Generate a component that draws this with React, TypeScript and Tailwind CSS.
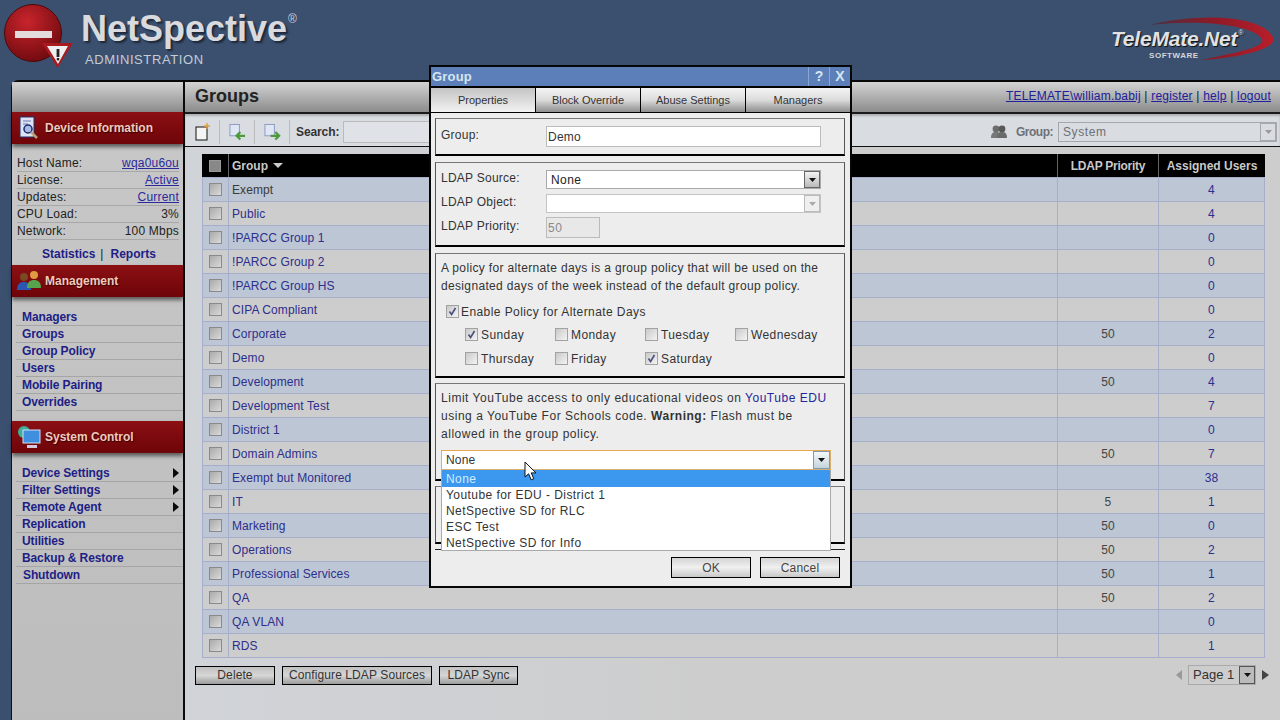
import React from "react";

const rows: [string, string, string][] = [
  ["Exempt", "", "4"], ["Public", "", "4"], ["!PARCC Group 1", "", "0"], ["!PARCC Group 2", "", "0"], ["!PARCC Group HS", "", "0"],
  ["CIPA Compliant", "", "0"], ["Corporate", "50", "2"], ["Demo", "", "0"], ["Development", "50", "4"], ["Development Test", "", "7"],
  ["District 1", "", "0"], ["Domain Admins", "50", "7"], ["Exempt but Monitored", "", "38"], ["IT", "5", "1"], ["Marketing", "50", "0"],
  ["Operations", "50", "2"], ["Professional Services", "50", "1"], ["QA", "50", "2"], ["QA VLAN", "", "0"], ["RDS", "", "1"],
];

function Caret({ color = "#111", w = 7, h = 4 }: { color?: string; w?: number; h?: number }) {
  return <svg width={w} height={h} viewBox="0 0 7 4" preserveAspectRatio="none"><path d="M0 0h7L3.5 4z" fill={color} /></svg>;
}

function Check({ on = false }: { on?: boolean }) {
  return (
    <span className="mb-[1px] flex h-[13px] w-[13px] shrink-0 items-center justify-center border border-[#a2a2a2] bg-gradient-to-br from-[#c9c9c9] to-[#f4f4f4]">
      {on && <svg width="9" height="9" viewBox="0 0 9 9"><path d="M1.5 4.5 3.6 7.5 7.5 1" fill="none" stroke="#4a4f7e" strokeWidth="1.6" /></svg>}
    </span>
  );
}

function Day({ label, on = false }: { label: string; on?: boolean }) {
  return <div className="flex items-center gap-[3px]"><Check on={on} /><span>{label}</span></div>;
}

function SideRow({ label, arrow = false, extra = "" }: { label: string; arrow?: boolean; extra?: string }) {
  return (
    <div className="flex h-[17px] items-center justify-between border-b border-[#a5a5a5] pr-[4px] pl-[6px]">
      <span className={`text-[12px] font-bold tracking-[-0.12px] text-[#1e1e86] ${extra}`}>{label}</span>
      {arrow && <svg width="6" height="10" viewBox="0 0 6 10"><path d="M0 0l6 5-6 5z" fill="#0a0a0a" /></svg>}
    </div>
  );
}

function InfoRow({ label, value, link = false }: { label: string; value: string; link?: boolean }) {
  return (
    <div className="flex h-[17px] items-center justify-between border-b border-[#a8a8a8] text-[12px] tracking-[0.2px] text-[#222]">
      <span>{label}</span>
      <span className={link ? "text-[#2a2a9c] underline" : ""}>{value}</span>
    </div>
  );
}

function RedHeader({ label, icon, className = "" }: { label: string; icon: React.ReactNode; className?: string }) {
  return (
    <div className={`flex h-[32px] items-center bg-gradient-to-b from-[#8b1014] to-[#6e0508] shadow-[0_3px_4px_rgba(0,0,0,0.55)] ${className}`}>
      <span className="flex w-[33px] shrink-0 justify-center">{icon}</span>
      <span className="text-[12px] font-bold text-[#efc9bd] [text-shadow:1px_1px_1px_#300]">{label}</span>
    </div>
  );
}

function Section({ className = "", children }: { className?: string; children?: React.ReactNode }) {
  return <div className={`ml-[4px] w-[410px] border border-t-[#777] border-r-[#555] border-b-2 border-b-black border-l-[#555] px-[5px] ${className}`}>{children}</div>;
}

function GrayButton({ label, className = "" }: { label: string; className?: string }) {
  return <button className={`flex items-center justify-center border border-black bg-gradient-to-b from-[#c0c0c0] via-[#d6d6d6] to-[#9c9c9c] text-[12px] tracking-[0.1px] text-[#333] ${className}`}>{label}</button>;
}

function DialogButton({ label }: { label: string }) {
  return <button className="flex h-[21px] w-[80px] items-center justify-center border border-black bg-gradient-to-b from-[#d4d4d4] via-[#f0f0f0] to-[#c8c8c8] text-[12px] tracking-[0.2px] text-[#444]">{label}</button>;
}

function Tab({ label, active = false }: { label: string; active?: boolean }) {
  return (
    <div className={`flex flex-1 items-center justify-center pt-[1px] text-[11px] text-[#333] ${active ? "bg-gradient-to-b from-[#c4c4c4] to-[#f2f2f2]" : "bg-gradient-to-b from-[#f4f4f4] via-[#dcdcdc] to-[#8e8e8e]"}`}>{label}</div>
  );
}

function MiniSelect({ text, disabled = false }: { text: string; disabled?: boolean }) {
  return (
    <div className={`flex h-[19px] w-[275px] items-center justify-between border bg-white pl-[4px] text-[12px] tracking-[0.4px] text-[#222] ${disabled ? "border-[#c4c4c4]" : "border-[#aaa]"}`}>
      <span>{text}</span>
      <span className={`flex h-[17px] w-[16px] items-center justify-center border ${disabled ? "border-[#bbb] bg-[#efefef]" : "border-[#666] bg-gradient-to-b from-[#f2f2f2] to-[#bbb]"}`}><Caret color={disabled ? "#aaa" : "#111"} /></span>
    </div>
  );
}

function Modal() {
  return (
    <div className="absolute top-[65px] left-[429px] z-10 flex h-[523px] w-[423px] flex-col border-2 border-[#060606] bg-[#ededed] text-[12px] text-[#333] [font-family:'Liberation_Sans',Arial,sans-serif]">
      <div className="flex h-[19px] items-center justify-between bg-[#5c7fb9] pl-[1px]">
        <span className="text-[13px] font-bold tracking-[0.2px] text-[#d5e6ee]">Group</span>
        <div className="flex h-full text-[14px] font-bold text-[#d5e6ee]">
          <span className="flex w-[21px] items-center justify-center border-l border-[#8aa6d2]">?</span>
          <span className="flex w-[21px] items-center justify-center border-l border-[#8aa6d2]">X</span>
        </div>
      </div>
      <div className="flex h-[27px] gap-[1px] border-t-2 border-b border-black bg-black">
        <Tab label="Properties" active /><Tab label="Block Override" /><Tab label="Abuse Settings" /><Tab label="Managers" />
      </div>
      <Section className="mt-[5px] h-[38px]">
        <div className="flex pt-[7px]">
          <span className="w-[105px] text-[12px] tracking-[0.25px]">Group:</span>
          <div className="flex h-[21px] w-[275px] items-center border border-[#bbb] bg-white pt-[1px] pl-[1px] tracking-[0.25px]">Demo</div>
        </div>
      </Section>
      <Section className="mt-[6px] flex h-[85px] flex-col pt-[7px] tracking-[0.25px]">
        <div className="flex h-[19px] items-center"><span className="mb-[4px] w-[105px]">LDAP Source:</span><MiniSelect text="None" /></div>
        <div className="mt-[5px] flex h-[19px] items-center"><span className="mb-[4px] w-[105px]">LDAP Object:</span><MiniSelect text="" disabled /></div>
        <div className="mt-[4px] flex h-[21px] items-center"><span className="mb-[4px] w-[105px]">LDAP Priority:</span><div className="flex h-[21px] w-[54px] items-center border border-[#bbb] bg-[#e8e8e8] pt-[1px] pl-[1px] tracking-[0.5px] text-[#8a8a8a]">50</div></div>
      </Section>
      <Section className="mt-[6px] h-[125px] pt-[5px] leading-[18px] tracking-[0.34px]">
        <p>A policy for alternate days is a group policy that will be used on the designated days of the week instead of the default group policy.</p>
        <div className="mt-[8px] ml-[5px] flex h-[18px] items-center gap-[2px] tracking-[0.42px]"><Check on /><span>Enable Policy for Alternate Days</span></div>
        <div className="mt-[5px] ml-[24px] grid grid-cols-[90px_90px_90px_90px] gap-y-[6px] tracking-[0.4px]">
          <Day label="Sunday" on /><Day label="Monday" /><Day label="Tuesday" /><Day label="Wednesday" />
          <Day label="Thursday" /><Day label="Friday" /><Day label="Saturday" on />
        </div>
      </Section>
      <Section className="mt-[5px] h-[98px] pt-[5px] leading-[18px] tracking-[0.52px]">
        <p>Limit YouTube access to only educational videos on <span className="text-[#26269a]">YouTube EDU</span> using a YouTube For Schools code. <b>Warning:</b> Flash must be allowed in the group policy.</p>
        <div className="relative mt-[7px] w-[390px]">
          <div className="flex h-[20px] items-center justify-between border border-[#d8b070] border-t-[#e8a850] bg-white pl-[4px] tracking-[0.2px]">
            <span>None</span>
            <span className="flex h-[18px] w-[17px] items-center justify-center border border-[#7d9ab0] bg-gradient-to-b from-[#f4f8fa] to-[#c4d4dc]"><Caret /></span>
          </div>
          <div className="absolute top-[20px] left-0 z-20 h-[81px] w-full border border-t-0 border-[#aaa] bg-white leading-[16px] tracking-[0.44px] text-[#333]">
            <div className="h-[17px] bg-[#3c97ee] pl-[4px] leading-[18px] text-[#cfeeff]">None</div>
            <div className="pl-[4px]">Youtube for EDU - District 1</div>
            <div className="pl-[4px]">NetSpective SD for RLC</div>
            <div className="pl-[4px]">ESC Test</div>
            <div className="pl-[4px]">NetSpective SD for Info</div>
          </div>
          <svg className="absolute top-[11px] left-[83px] z-30" width="14" height="20" viewBox="0 0 14 20">
            <path d="M1 1v15l3.6-3.2 2.6 6 2.6-1.1-2.6-5.8h4.8z" fill="#fff" stroke="#111" strokeWidth="1" />
          </svg>
        </div>
      </Section>
      <Section className="mt-[5px] h-[58px]" />
      <div className="mx-[4px] mt-[5px] h-[1px] w-[410px] bg-[#222]" />
      <div className="mt-[7px] flex justify-end gap-[9px] pr-[10px]">
        <DialogButton label="OK" />
        <DialogButton label="Cancel" />
      </div>
    </div>
  );
}

export default function App() {
  return (
    <div className="relative flex h-[720px] w-[1280px] flex-col overflow-hidden bg-[#3b506f] [font-family:'Liberation_Sans',Arial,sans-serif]">
      <header className="flex h-[80px] shrink-0 justify-between">
        <div className="flex">
          <svg className="mt-[4px] ml-[4px]" width="72" height="68" viewBox="0 0 72 68">
            <defs>
              <radialGradient id="red" cx="40%" cy="30%" r="75%"><stop offset="0" stopColor="#c8242c" /><stop offset="1" stopColor="#6e0a0e" /></radialGradient>
            </defs>
            <circle cx="29" cy="29" r="28.5" fill="url(#red)" stroke="#4b0a0c" />
            <rect x="11" y="27" width="37" height="7" fill="#e4dcdc" />
            <path d="M38 39h31L53.5 64z" fill="#a81a20" />
            <path d="M43 42h21L54 60z" fill="#eee" />
            <rect x="52.6" y="45" width="2.8" height="8" fill="#222" />
            <rect x="52.8" y="54" width="2.4" height="2.4" fill="#222" />
          </svg>
          <div className="ml-[5px] flex flex-col">
            <div className="relative mt-[8px] h-[42px]">
              <span className="text-[36px] leading-[42px] font-bold text-[#d8dade] [text-shadow:2px_2px_2px_#1c2738]">NetSpective</span>
              <span className="absolute top-[2px] left-[207px] text-[12px] text-[#ccd]">®</span>
            </div>
            <span className="mt-[2px] ml-[4px] text-[13px] leading-[16px] tracking-[0.6px] text-[#c4ccd6]">ADMINISTRATION</span>
          </div>
        </div>
        <div className="relative mt-[17px] mr-[6px] h-[45px] w-[170px]">
          <svg className="absolute top-0 left-[46px]" width="125" height="44" viewBox="0 0 125 44">
            <defs>
              <linearGradient id="sw" x1="0" x2="1" y1="0" y2="0"><stop offset="0" stopColor="#4a3040" /><stop offset="0.5" stopColor="#8c1a26" /><stop offset="1" stopColor="#b81e2a" /></linearGradient>
            </defs>
            <path d="M0 8C35-2 112-6 124 22 124 32 90 41 50 43 85 36 116 30 112 22 104 8 50 2 0 8z" fill="url(#sw)" />
          </svg>
          <div className="relative pt-[10px] pl-[7px] text-[21px] leading-[24px] font-bold tracking-[-0.2px] text-[#e0e2e4] italic [text-shadow:1px_1px_1px_#111]">TeleMate.Net<sup className="ml-[1px] align-super text-[7px] font-normal">®</sup></div>
          <div className="relative pl-[45px] text-[8px] leading-[9px] font-bold tracking-[0.55px] text-[#d4d6da]">SOFTWARE</div>
        </div>
      </header>

      <div className="ml-[11px] flex min-h-0 flex-1 rounded-tl-[8px] border-t-2 border-l border-t-[#080808] border-l-[#111] bg-[#cdcdcd]">
        <aside className="flex w-[173px] shrink-0 flex-col border-r-2 border-[#0a0a0a] bg-gradient-to-b from-[#c8c8c8] to-[#bdbdbd]">
          <div className="h-[30px] rounded-tl-[6px] bg-gradient-to-b from-[#d4d4d4] to-[#8c8c8c]" />
          <RedHeader label="Device Information" icon={
            <svg width="22" height="24" viewBox="0 0 22 24"><rect x="2" y="1" width="14" height="20" fill="#dfe4f2" stroke="#24306c" /><path d="M5 5h8M5 8h5" stroke="#6a78b4" /><circle cx="10" cy="13" r="4" fill="#a6bce6" stroke="#1b2a70" strokeWidth="1.5" /><path d="M13 16l6 6" stroke="#b9a27a" strokeWidth="2.5" /></svg>
          } />
          <div className="mt-[11px] flex flex-col pr-[4px] pl-[5px]">
            <InfoRow label="Host Name:" value="wqa0u6ou" link />
            <InfoRow label="License:" value="Active" link />
            <InfoRow label="Updates:" value="Current" link />
            <InfoRow label="CPU Load:" value="3%" />
            <InfoRow label="Network:" value="100 Mbps" />
          </div>
          <div className="mt-[5px] flex h-[17px] items-center pl-[30px] text-[12px] font-bold text-[#1e1e86]">
            <span>Statistics</span><span className="mx-[5px] font-normal text-[#222]">|</span><span className="ml-[2px]">Reports</span>
          </div>
          <RedHeader className="mt-[3px]" label="Management" icon={
            <svg width="26" height="22" viewBox="0 0 26 22"><circle cx="8" cy="7" r="4" fill="#7a4a24" /><path d="M1 20c0-6 3-8 7-8s7 2 7 8z" fill="#2c56b4" /><circle cx="18" cy="5" r="4" fill="#e09a40" /><path d="M11 18c0-6 3-8 7-8s7 2 7 8z" fill="#58a44c" /></svg>
          } />
          <div className="mt-[12px] flex flex-col pl-[4px]">
            {["Managers", "Groups", "Group Policy", "Users", "Mobile Pairing", "Overrides"].map((x) => <SideRow key={x} label={x} />)}
          </div>
          <RedHeader className="mt-[10px]" label="System Control" icon={
            <svg width="26" height="26" viewBox="0 0 26 26"><circle cx="8" cy="8" r="6" fill="#3fae9a" /><rect x="7" y="6" width="17" height="13" fill="#3f8ee0" stroke="#cfe2f4" /><path d="M11 21h10v3H11z" fill="#d4c8da" /></svg>
          } />
          <div className="mt-[12px] flex flex-col pl-[4px]">
            <SideRow label="Device Settings" arrow />
            <SideRow label="Filter Settings" arrow />
            <SideRow label="Remote Agent" arrow />
            {["Replication", "Utilities", "Backup & Restore"].map((x) => <SideRow key={x} label={x} />)}
            <SideRow label="Shutdown" extra="ml-[1px]" />
          </div>
        </aside>

        <main className="flex min-w-0 flex-1 flex-col">
          <div className="flex h-[30px] shrink-0 items-center justify-between bg-gradient-to-b from-[#d4d4d4] to-[#8c8c8c] pr-[9px] pb-[2px] pl-[10px]">
            <span className="text-[18px] font-bold text-[#222]">Groups</span>
            <div className="text-[12px] tracking-[0.2px] text-[#222]">
              <span className="text-[#20209a] underline">TELEMATE\william.babij</span> | <span className="text-[#20209a] underline">register</span> | <span className="text-[#20209a] underline">help</span> | <span className="text-[#20209a] underline">logout</span>
            </div>
          </div>
          <div className="flex h-[35px] shrink-0 items-center border-t-2 border-b border-t-[#1a1a1a] border-b-[#111] bg-[#d9dce0] pt-[3px] pr-[3px] pl-[10px] shadow-[inset_0_2px_2px_rgba(0,0,0,0.2)]">
            <svg width="16" height="18" viewBox="0 0 16 18"><rect x="1" y="4" width="11" height="13" fill="#f4f4f4" stroke="#111" /><path d="M12 0v6M9 3h6" stroke="#e0a040" strokeWidth="1.5" /></svg>
            <span className="mr-[9px] ml-[8px] h-[24px] w-[1px] bg-[#bbb]" />
            <svg width="17" height="18" viewBox="0 0 18 18"><rect x="1" y="1" width="10" height="12" fill="#dfe6f4" stroke="#8c98c4" /><path d="M17 13H9M12 9l-4 4 4 4" fill="none" stroke="#4c9a3c" strokeWidth="2.4" /></svg>
            <span className="mr-[9px] ml-[8px] h-[24px] w-[1px] bg-[#bbb]" />
            <svg width="17" height="18" viewBox="0 0 18 18"><rect x="1" y="1" width="10" height="12" fill="#dfe6f4" stroke="#8c98c4" /><path d="M7 13h8M12 9l4 4-4 4" fill="none" stroke="#4c9a3c" strokeWidth="2.4" /></svg>
            <span className="mr-[6px] ml-[8px] h-[24px] w-[1px] bg-[#bbb]" />
            <span className="text-[12px] font-bold tracking-[-0.1px] text-[#333]">Search:</span>
            <div className="ml-[4px] h-[22px] w-[90px] border border-[#bbb] bg-[#dfe2e6]" />
            <div className="flex-1" />
            <svg width="16" height="14" viewBox="0 0 16 14"><circle cx="5" cy="4" r="3.4" fill="#6c6c6c" /><circle cx="11" cy="4" r="3.4" fill="#585858" /><path d="M0 13c0-5 2-6 5-6s5 1 5 6z" fill="#777" /><path d="M6 13c0-5 2-6 5-6s5 1 5 6z" fill="#6a6a6a" /></svg>
            <span className="mr-[5px] ml-[9px] text-[12px] font-bold tracking-[-0.5px] text-[#6d7078]">Group:</span>
            <div className="flex h-[20px] w-[219px] items-center justify-between border border-[#a5a8ac] pl-[4px] text-[12px] tracking-[0.6px] text-[#6d7078]">
              <span>System</span>
              <span className="flex h-[18px] w-[16px] items-center justify-center border border-[#a5a8ac]"><Caret color="#999" /></span>
            </div>
          </div>

          <div className="flex flex-1 flex-col bg-gradient-to-r from-[#d0d3d8] via-[#cdcdcd] to-[#cdcdcd] pt-[7px]">
            <div className="ml-[17px] w-[1063px] border-b border-[#a7aecb]">
              <div className="grid h-[23px] grid-cols-[26px_829px_101px_107px] items-center bg-black text-[12px] font-bold text-[#c9c9c9]">
                <span className="flex justify-center"><span className="h-[12px] w-[12px] border border-[#999] bg-[#888]" /></span>
                <span className="flex h-full items-center gap-[5px] border-l border-[#666] pl-[3px]">Group <Caret color="#ccc" w={10} h={5} /></span>
                <span className="flex h-full items-center justify-center border-l border-[#666] tracking-[-0.25px]">LDAP Priority</span>
                <span className="flex h-full items-center justify-center border-l border-[#666]">Assigned Users</span>
              </div>
              {rows.map((r, i) => (
                <div key={r[0]} className={`grid h-[24px] grid-cols-[25px_829px_101px_107px] items-center border-t border-l border-[#a7aecb] text-[12px] tracking-[0.1px] ${i % 2 === 0 ? "bg-[#bcc6d4]" : "bg-[#cdcdcd]"}`}>
                  <span className="flex justify-center"><span className="h-[13px] w-[13px] border border-[#8a8a8a] bg-gradient-to-br from-[#aaa] to-[#dadada]" /></span>
                  <span className={`flex h-full items-center border-l border-[#a7aecb] pl-[3px] ${i === 0 ? "text-[#3a3a3a]" : "text-[#2e2e8c]"}`}>{r[0]}</span>
                  <span className="flex h-full items-center justify-center border-l border-[#a7aecb] text-[#444]">{r[1]}</span>
                  <span className="flex h-full items-center justify-center border-r border-l border-[#a7aecb] text-[#2e2e8c]">{r[2]}</span>
                </div>
              ))}
            </div>
            <div className="mt-[7px] flex items-center pr-[11px] pl-[10px]">
              <GrayButton label="Delete" className="h-[19px] w-[80px]" />
              <GrayButton label="Configure LDAP Sources" className="ml-[7px] h-[19px] w-[150px]" />
              <GrayButton label="LDAP Sync" className="ml-[7px] h-[19px] w-[79px]" />
              <div className="flex-1" />
              <svg width="6" height="10" viewBox="0 0 6 10"><path d="M6 0 0 5l6 5z" fill="#999" /></svg>
              <div className="mx-[6px] flex h-[20px] w-[68px] items-center justify-between border border-[#aaa] pl-[4px] text-[13px] text-[#333]">
                <span>Page 1</span>
                <span className="flex h-[18px] w-[16px] items-center justify-center border border-[#555] bg-[#bbb]"><Caret /></span>
              </div>
              <svg width="7" height="10" viewBox="0 0 7 10"><path d="M0 0l7 5-7 5z" fill="#444" /></svg>
            </div>
          </div>
        </main>
      </div>
      <Modal />
    </div>
  );
}
